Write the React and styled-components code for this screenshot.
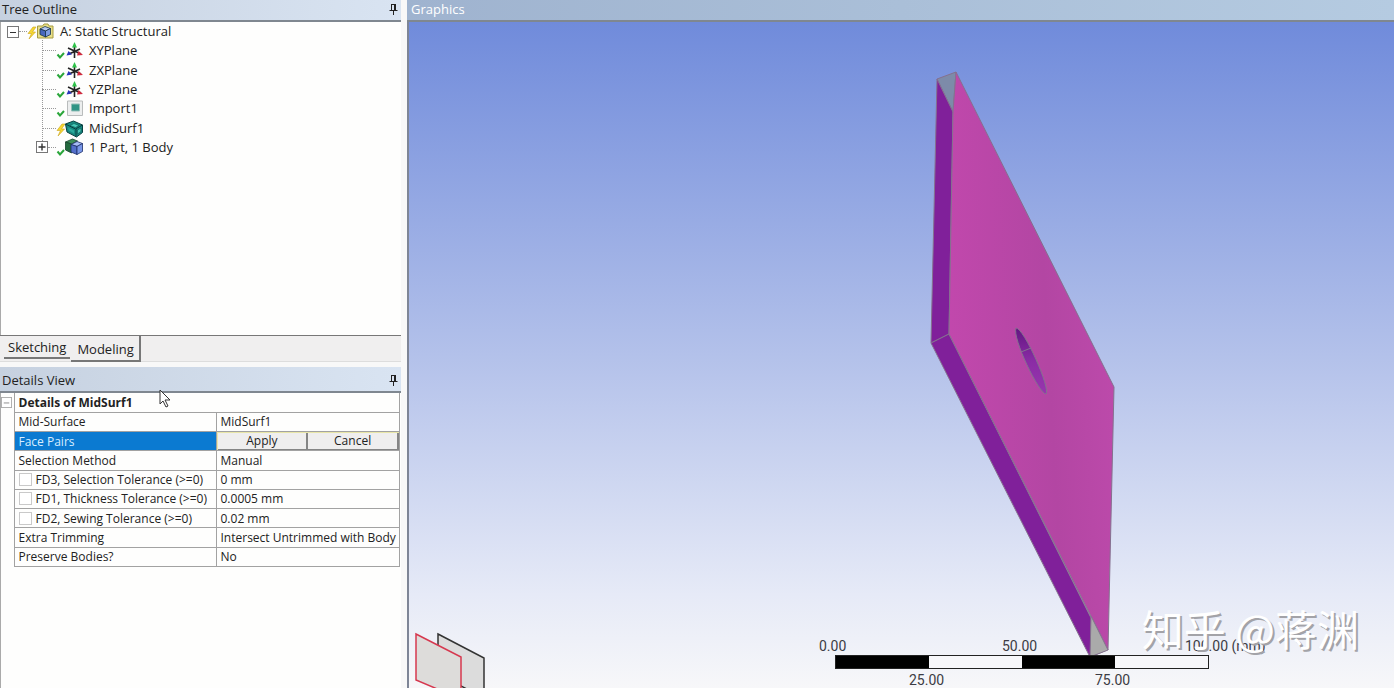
import React, { useState } from "react";
import styled, { createGlobalStyle } from "styled-components";

const GlobalStyle = createGlobalStyle`
  * {
    box-sizing: border-box;
  }

  body {
    margin: 0;
    background: #f8f8f8;
    color: #222;
    font-family: "Open Sans", "Noto Sans CJK SC", sans-serif;
    font-size: 12px;
  }
`;

const Page = styled.div`
  display: grid;
  grid-template-columns: 401px minmax(0, 1fr);
  column-gap: 6px;
  min-height: 100vh;
`;

const Sidebar = styled.aside`
  display: flex;
  flex-direction: column;
`;

const PanelHeader = styled.header`
  display: flex;
  align-items: center;
  justify-content: space-between;
  height: ${(props) => (props.$tall ? "26px" : "22px")};
  padding: ${(props) => (props.$tall ? "2px 3px 0 2px" : "0 3px 2px 2px")};
  border-bottom: 2px solid #7f8790;
  background: linear-gradient(90deg, #c6d1e0, #d9e4f2);
`;

const PanelTitle = styled.h2`
  margin: 0;
  font-size: 13px;
  font-weight: 400;
  line-height: 18px;
`;

const PinButton = styled.button`
  display: flex;
  padding: 0;
  border: 0;
  background: none;
`;

const TreeArea = styled.div`
  flex: 0 0 313px;
  padding-left: 6px;
  border-left: 1px solid #aaa;
  background: #fefefd;
`;

const Tree = styled.ul`
  position: relative;
  display: grid;
  grid-auto-rows: 1fr;
  height: 135px;
  margin: 0;
  padding: 0;
  list-style: none;

  &::before {
    content: "";
    position: absolute;
    top: 18px;
    bottom: 14px;
    left: 35px;
    border-left: 1px dotted #999;
  }
`;

const TreeItem = styled.li`
  position: relative;
  display: flex;
  align-items: center;
  padding-left: ${(props) => (props.$depth ? "29px" : "0")};
  font-size: 13px;
  line-height: 19px;
`;

const Expander = styled.button`
  display: flex;
  padding: 0;
  border: 0;
  background: #fff;
`;

const Branch = styled.span`
  width: ${(props) => (props.$long ? "14px" : "8px")};
  margin-left: ${(props) => (props.$long ? "6px" : "0")};
  border-top: 1px dotted #999;
`;

const TreeIcon = styled.svg`
  flex: none;
  width: 29px;
  height: 19px;
  margin-right: 4px;
`;

const Tabs = styled.div`
  display: flex;
  align-items: flex-start;
  height: 27px;
  border-top: 1px solid #777;
  border-bottom: 1px solid #ddd;
  background: #f0efef;
`;

const Tab = styled.button`
  height: ${(props) => (props.$active ? "26px" : "23px")};
  margin-left: ${(props) => (props.$active ? "1px" : "4px")};
  padding: ${(props) => (props.$active ? "2px 5px 0 6px" : "0 4px")};
  border: solid #777;
  border-width: ${(props) => (props.$active ? "0 2px 2px 0" : "0 0 2px")};
  background: #f0efef;
  color: #222;
  font: 13px "Open Sans", sans-serif;
`;

const Details = styled.section`
  flex: 1;
  display: flex;
  flex-direction: column;
  margin-top: 5px;
`;

const DetailsBody = styled.div`
  flex: 1;
  border-left: 1px solid #aaa;
  background: #fefefd;
`;

const Table = styled.table`
  width: 399px;
  height: 174px;
  border-collapse: collapse;
  table-layout: fixed;

  th,
  td {
    height: 19px;
    padding: 0 0 0 4px;
    border: 1px solid #a2a2a2;
    line-height: 17px;
    font-weight: 400;
    text-align: left;
    white-space: nowrap;
  }
`;

const GutterCol = styled.col`
  width: 13px;
`;

const NameCol = styled.col`
  width: 202px;
`;

const Gutter = styled.td`
  && {
    padding: 0;
    border-width: 0 1px 0 0;
    vertical-align: middle;
  }
`;

const TitleCell = styled.th`
  && {
    font-weight: 700;
    border-top: 0;
  }
`;

const NameCell = styled.th`
  && {
    ${(props) => props.$selected && "background: #0b7ad1; color: #d8edff;"}
  }
`;

const ValueCell = styled.td`
  && {
    ${(props) => props.$editing && "padding: 0; background: #e9e6a8;"}
  }
`;

const CheckLabel = styled.label`
  display: flex;
  align-items: center;
  gap: 4px;
`;

const CheckBox = styled.input`
  appearance: none;
  width: 13px;
  height: 13px;
  margin: 0;
  border: 1px solid #c9c9c9;
  background: #fff;

  &:checked {
    background: #0b7ad1;
  }
`;

const ButtonPair = styled.div`
  display: grid;
  grid-template-columns: 1fr 1fr;
  padding: 1px 0 0 1px;
`;

const CellButton = styled.button`
  height: 17px;
  padding: 0;
  border: solid #858585;
  border-width: 0 2px 1px 0;
  background: #efeeee;
  color: #222;
  font: 12px/16px "Open Sans", sans-serif;
`;

const Graphics = styled.main`
  display: flex;
  flex-direction: column;
  min-width: 0;
`;

const GraphicsHeader = styled(PanelHeader)`
  padding-left: 4px;
  background: linear-gradient(90deg, #9fb3cf, #b5cbe1);
  color: #fff;
`;

const Viewport = styled.div`
  position: relative;
  flex: 1;
  min-height: 480px;
  overflow: hidden;
  border-left: 2px solid #7e8596;
  background: linear-gradient(#708bdb, #b3c1ea 50%, #e6eaf7 86%, #f7f7f9);
`;

const Model = styled.svg`
  position: absolute;
  inset: 0;
  width: 100%;
  height: 100%;
`;

const PlaneIcon = styled.svg`
  position: absolute;
  left: 5px;
  bottom: 0;
  width: 72px;
  height: 57px;
`;

const Ruler = styled.div`
  position: absolute;
  right: 127px;
  bottom: 0;
  width: 448px;
  color: #3c3c44;
  font: 14px/16px Roboto, sans-serif;
  white-space: nowrap;
`;

const RulerLabels = styled.div`
  display: grid;
  grid-template-columns: ${(props) =>
    props.$lower ? "186px 186px" : "183px 183px 82px"};
  height: ${(props) => (props.$lower ? "19px" : "17px")};
  padding: ${(props) => (props.$lower ? "3px 0 0 90px" : "0")};
`;

const RulerBar = styled.div`
  display: grid;
  grid-template-columns: repeat(4, 1fr);
  width: 374px;
  height: 14px;
  margin-left: 16px;
  border: 1px solid #222;
`;

const RulerStep = styled.span`
  background: ${(props) => (props.$dark ? "#000" : "#f7f7fa")};
`;

const Watermark = styled.div`
  position: absolute;
  right: 35px;
  bottom: 30px;
  color: #fff;
  font: 42px/60px "Noto Sans CJK SC", sans-serif;
  text-shadow: 2px 2px 0 #a3a3a8;
`;

const Pointer = styled.svg`
  position: absolute;
  top: 389px;
  left: 159px;
  width: 12px;
  height: 19px;
`;

const Pin = () => (
  <svg width="9" height="12" viewBox="0 0 9 12" fill="none" stroke="#222">
    <path d="M2.5 1v6M2 1.5h4M.5 7.5h8M4.5 7.5V12" />
    <path d="M6 1v6" strokeWidth="2" />
  </svg>
);

const Box = ({ open, size = 12, light }) => (
  <svg width={size} height={size} viewBox="0 0 12 12">
    <rect
      x=".5"
      y=".5"
      width="11"
      height="11"
      fill="#fff"
      stroke={light ? "#aaa" : "#777"}
    />
    <path
      d={open ? "M3 6.5h6" : "M2.5 6h7M6 2.5v7"}
      stroke={light ? "#888" : "#333"}
      strokeWidth={open ? 1 : 1.4}
    />
  </svg>
);

const Check = () => (
  <path d="M1.500 13.500l2.500 3 4-4.500" fill="none" stroke="#2aa63a" strokeWidth="2" />
);

const Bolt = () => (
  <path
    d="M6 5L1 11.500h3.500L2 17l6.500-7H5.500L9 5z"
    fill="#f7d832"
    stroke="#c9a51c"
    strokeWidth=".6"
  />
);

const Cube = ({ x, y, top, left, right }) => (
  <g transform={`translate(${x} ${y})`} stroke="#17324a" strokeWidth=".8">
    <path d="M0 2.500L5 0l5.500 2-5 2.500z" fill={top} />
    <path d="M0 2.500l5.500 2v6L0 8z" fill={left} />
    <path d="M5.500 4.500l5-2.500v6l-5 2.500z" fill={right} />
  </g>
);

const icons = {
  root: (
    <>
      <Bolt />
      <path d="M10.500 4h5l1.500-2h4l1 2h4v12h-15.500z" fill="#e8df87" stroke="#a69b40" />
      <Cube x="13" y="4.500" top="#b7c9f2" left="#4768bd" right="#7d9ce2" />
    </>
  ),
  plane: (
    <>
      <Check />
      <path
        d="M18.500 17V5M12 7l13 6M24 8l-11 5"
        stroke="#222"
        strokeWidth="1.600"
      />
      <path d="M16 6.500l2.500-5.500L21 6.500z" fill="#2fc24b" />
      <path d="M22.500 10l4.500 4-6 .5z" fill="#d22a3e" />
      <path d="M10.500 14.500l2-4.500 3.500 3.500z" fill="#2834bc" />
    </>
  ),
  import: (
    <>
      <Check />
      <path d="M11.500 2h15v14.500h-15z" fill="#eceeee" stroke="#b9bcbc" />
      <path d="M15.500 5h8v7h-8z" fill="#2f9485" stroke="#91bdb6" />
    </>
  ),
  midsurf: (
    <>
      <Bolt />
      <path
        d="M9.500 5l8-3 9 4v7.500l-6 4.500-9.500-5z"
        fill="#178a80"
        stroke="#093f40"
      />
      <path d="M9.500 5l10 5 7-4M20 10v7.500" fill="none" stroke="#093f40" />
      <path
        d="M14 6.500l4-2 5 2-3.500 2zM21.500 11l3.500-2v3.500l-3.500 2.500z"
        fill="#49c9b8"
        stroke="#0c5652"
        strokeWidth=".6"
      />
      <path d="M12 8.500l6 3v3l-5-3z" fill="#2cab9d" />
    </>
  ),
  part: (
    <>
      <Check />
      <g transform="translate(9.500 1)" stroke="#17432b" strokeWidth=".8">
        <path d="M0 3l7-3 5 2-6 3z" fill="#3d8d59" />
        <path d="M0 3l6 2v9l-6-3z" fill="#236a3d" />
      </g>
      <g transform="translate(15 3.500)" stroke="#1d2f67" strokeWidth=".8">
        <path d="M0 3l6-3 5.500 2-5.500 3z" fill="#a6bbf4" />
        <path d="M0 3l6 2v8l-6-2.500z" fill="#536fca" />
        <path d="M6 5l5.500-3v8L6 13z" fill="#7896e7" />
      </g>
    </>
  ),
};

const treeItems = [
  { icon: "plane", text: "XYPlane" },
  { icon: "plane", text: "ZXPlane" },
  { icon: "plane", text: "YZPlane" },
  { icon: "import", text: "Import1" },
  { icon: "midsurf", text: "MidSurf1" },
  { icon: "part", text: "1 Part, 1 Body", expandable: true },
];

const rows = [
  { name: "Mid-Surface", value: "MidSurf1" },
  { name: "Face Pairs", editing: true },
  { name: "Selection Method", value: "Manual" },
  { name: "FD3, Selection Tolerance (>=0)", value: "0 mm", check: true },
  { name: "FD1, Thickness Tolerance (>=0)", value: "0.0005 mm", check: true },
  { name: "FD2, Sewing Tolerance (>=0)", value: "0.02 mm", check: true },
  { name: "Extra Trimming", value: "Intersect Untrimmed with Body" },
  { name: "Preserve Bodies?", value: "No" },
];

const Plate = () => (
  <Model viewBox="0 0 985 666" preserveAspectRatio="xMidYMid meet">
    <defs>
      <linearGradient id="face" x1="0" y1=".6" x2="1" y2=".4">
        <stop offset="0" stopColor="#c248ad" />
        <stop offset=".6" stopColor="#b346a3" />
        <stop offset="1" stopColor="#bd4aab" />
      </linearGradient>
      <linearGradient id="hole" x1="0" y1="0" x2="0" y2="1">
        <stop offset="0" stopColor="#631682" />
        <stop offset=".5" stopColor="#8a2ca5" />
        <stop offset="1" stopColor="#9836ae" />
      </linearGradient>
    </defs>
    <g stroke="#85718f" strokeLinejoin="round">
      <path d="M528 57l19-7-3 40z" fill="#7d8ba9" />
      <path d="M528 57l16 33-4 222-18 9z" fill="#80209a" />
      <path d="M522 321l18-9 158 316-17 7z" fill="#80209a" />
      <path d="M547 50l158 315-6 263L540 312l4-222z" fill="url(#face)" />
      <path d="M682 594l17 34-18 7z" fill="#aaa" />
      <path
        d="M607 306c8 0 35 61 30 66-7 0-34-56-30-66z"
        fill="url(#hole)"
      />
      <path d="M612 330l10-4" />
    </g>
  </Model>
);

const DetailsTable = () => (
  <Table>
    <colgroup>
      <GutterCol />
      <NameCol />
      <col />
    </colgroup>
    <tbody>
      <tr>
        <Gutter>
          <Expander aria-label="Collapse details">
            <Box open light size={11} />
          </Expander>
        </Gutter>
        <TitleCell colSpan={2}>Details of MidSurf1</TitleCell>
      </tr>
      {rows.map((row) => (
        <tr key={row.name}>
          <Gutter />
          <NameCell $selected={row.editing}>
            {row.check ? (
              <CheckLabel>
                <CheckBox type="checkbox" />
                {row.name}
              </CheckLabel>
            ) : (
              row.name
            )}
          </NameCell>
          <ValueCell $editing={row.editing}>
            {row.editing ? (
              <ButtonPair>
                <CellButton>Apply</CellButton>
                <CellButton>Cancel</CellButton>
              </ButtonPair>
            ) : (
              row.value
            )}
          </ValueCell>
        </tr>
      ))}
    </tbody>
  </Table>
);

const App = () => {
  const [tab, setTab] = useState("Modeling");

  return (
    <>
      <GlobalStyle />
      <Page>
        <Sidebar>
          <PanelHeader>
            <PanelTitle>Tree Outline</PanelTitle>
            <PinButton aria-label="Pin tree outline">
              <Pin />
            </PinButton>
          </PanelHeader>
          <TreeArea>
            <Tree>
              <TreeItem>
                <Expander aria-label="Collapse">
                  <Box open />
                </Expander>
                <Branch />
                <TreeIcon viewBox="0 0 29 19">{icons.root}</TreeIcon>
                A: Static Structural
              </TreeItem>
              {treeItems.map((item) => (
                <TreeItem key={item.text} $depth={1}>
                  {item.expandable && (
                    <Expander aria-label="Expand">
                      <Box />
                    </Expander>
                  )}
                  <Branch $long={!item.expandable} />
                  <TreeIcon viewBox="0 0 29 19">{icons[item.icon]}</TreeIcon>
                  {item.text}
                </TreeItem>
              ))}
            </Tree>
          </TreeArea>
          <Tabs>
            {["Sketching", "Modeling"].map((name) => (
              <Tab key={name} $active={tab === name} onClick={() => setTab(name)}>
                {name}
              </Tab>
            ))}
          </Tabs>
          <Details>
            <PanelHeader $tall>
              <PanelTitle>Details View</PanelTitle>
              <PinButton aria-label="Pin details">
                <Pin />
              </PinButton>
            </PanelHeader>
            <DetailsBody>
              <DetailsTable />
            </DetailsBody>
          </Details>
        </Sidebar>
        <Graphics>
          <GraphicsHeader>
            <PanelTitle>Graphics</PanelTitle>
          </GraphicsHeader>
          <Viewport>
            <Plate />
            <PlaneIcon viewBox="0 0 72 57">
              <path d="M24 3l46 24v40L24 43z" fill="#dcdcdc" stroke="#333" strokeWidth="1.500" />
              <path d="M2 3l45 23v42L2 49z" fill="#dddcda" stroke="#d6384f" strokeWidth="1.500" />
            </PlaneIcon>
            <Ruler>
              <RulerLabels>
                <span>0.00</span>
                <span>50.00</span>
                <span>100.00 (mm)</span>
              </RulerLabels>
              <RulerBar>
                <RulerStep $dark />
                <RulerStep />
                <RulerStep $dark />
                <RulerStep />
              </RulerBar>
              <RulerLabels $lower>
                <span>25.00</span>
                <span>75.00</span>
              </RulerLabels>
            </Ruler>
            <Watermark>知乎 @蒋渊</Watermark>
          </Viewport>
        </Graphics>
      </Page>
      <Pointer viewBox="0 0 12 19">
        <path d="M1 1v14l3-3 3 6 2-1-3-6h5z" fill="#fff" stroke="#333" />
      </Pointer>
    </>
  );
};

export default App;
